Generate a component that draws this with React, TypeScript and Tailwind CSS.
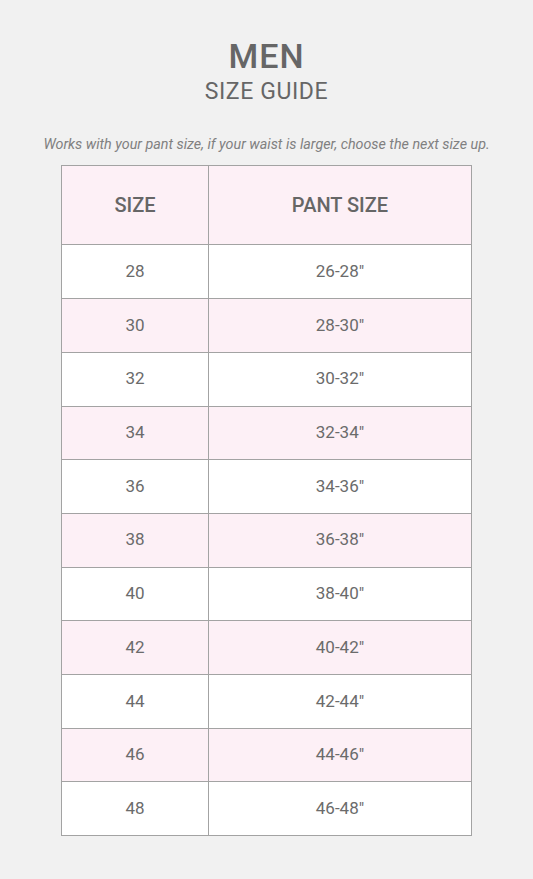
import React from 'react';

const rows = [
  ['28', '26-28"'],
  ['30', '28-30"'],
  ['32', '30-32"'],
  ['34', '32-34"'],
  ['36', '34-36"'],
  ['38', '36-38"'],
  ['40', '38-40"'],
  ['42', '40-42"'],
  ['44', '42-44"'],
  ['46', '44-46"'],
  ['48', '46-48"'],
];

export default function App() {
  return (
    <div className="min-h-[879px] w-[533px] bg-[#f1f1f1] text-[#666666] font-['Roboto',sans-serif]">
      {/* Heading */}
      <div className="flex flex-col items-center pt-[36px]">
        <h1 className="text-[34px] leading-[40px] font-medium tracking-[1px]">MEN</h1>
        <h2 className="mt-[2px] text-[23px] leading-[28px] tracking-[0.6px]">SIZE GUIDE</h2>
      </div>

      <p className="mt-[28px] text-center text-[14.3px] italic text-[#808080]">
        Works with your pant size, if your waist is larger, choose the next size up.
      </p>

      {/* Table */}
      <div className="flex justify-center mt-[10px]">
        <table className="w-[411px] border-collapse border border-[#a3a3a3]">
          <thead>
            <tr className="h-[79px] bg-[#fdf0f6]">
              <th className="w-[147px] border border-[#a3a3a3] text-[20px] font-medium">SIZE</th>
              <th className="border border-[#a3a3a3] text-[20px] font-medium">PANT SIZE</th>
            </tr>
          </thead>
          <tbody>
            {rows.map(([size, pant], i) => (
              <tr key={size} className={`h-[53.7px] ${i % 2 === 1 ? 'bg-[#fdf0f6]' : 'bg-white'}`}>
                <td className="border border-[#a3a3a3] text-center text-[17px] text-[#6b6b6b]">{size}</td>
                <td className="border border-[#a3a3a3] text-center text-[17px] text-[#6b6b6b]">{pant}</td>
              </tr>
            ))}
          </tbody>
        </table>
      </div>
    </div>
  );
}
